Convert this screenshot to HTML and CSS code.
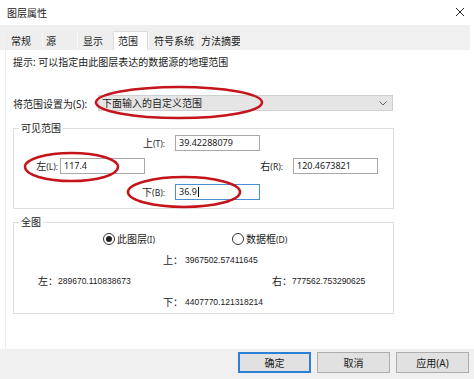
FILE: index.html
```html
<!DOCTYPE html>
<html lang="zh-CN">
<head>
<meta charset="utf-8">
<title>图层属性</title>
<link rel="stylesheet" href="styles.css">
</head>
<body>
<div class="window">
  <div class="titlebar">
    <span class="title">图层属性</span>
    <svg class="close" width="10" height="10" viewBox="0 0 10 10"><path d="M1 1 L9 9 M9 1 L1 9" stroke="#222" stroke-width="1" fill="none"/></svg>
  </div>
  <div class="tabstrip">
    <div class="tab t1">常规</div>
    <div class="tab t2">源</div>
    <div class="tab t3">显示</div>
    <div class="tab t4 active">范围</div>
    <div class="tab t5">符号系统</div>
    <div class="tab t6">方法摘要</div>
  </div>
  <div class="panel">
    <p class="hint">提示: 可以指定由此图层表达的数据源的地理范围</p>
    <div class="setrow">
      <span class="setlbl">将范围设置为(S):</span>
      <div class="combo">
        <span>下面输入的自定义范围</span>
        <svg class="chev" width="8" height="5" viewBox="0 0 8 5"><path d="M0.5 0.5 L4 4 L7.5 0.5" stroke="#666" stroke-width="1" fill="none"/></svg>
      </div>
    </div>
    <fieldset class="group g1">
      <legend>可见范围</legend>
      <div class="frow r1">
        <div class="pair mid"><span class="lbl">上<small>(T):</small></span><div class="inp">39.42288079</div></div>
      </div>
      <div class="frow r2">
        <div class="pair left"><span class="lbl">左<small>(L):</small></span><div class="inp">117.4</div></div>
        <div class="pair right"><span class="lbl">右<small>(R):</small></span><div class="inp">120.4673821</div></div>
      </div>
      <div class="frow r3">
        <div class="pair mid"><span class="lbl">下<small>(B):</small></span><div class="inp focus">36.9<span class="caret"></span></div></div>
      </div>
    </fieldset>
    <fieldset class="group g2">
      <legend>全图</legend>
      <div class="vrow radios">
        <div class="radio first"><span class="dot on"></span><span>此图层<small>(I)</small></span></div>
        <div class="radio"><span class="dot"></span><span>数据框<small>(D)</small></span></div>
      </div>
      <div class="vrow">
        <span class="vl mid">上：</span><span class="val w77">3967502.57411645</span>
      </div>
      <div class="vrow">
        <span class="vl lft">左：</span><span class="val w73">289670.110838673</span>
        <span class="vl rgt">右：</span><span class="val w70">777562.753290625</span>
      </div>
      <div class="vrow">
        <span class="vl mid">下：</span><span class="val w80">4407770.121318214</span>
      </div>
    </fieldset>
  </div>
  <div class="footer">
    <button class="btn default">确定</button>
    <button class="btn">取消</button>
    <button class="btn">应用(A)</button>
  </div>
  <svg class="marks" width="474" height="379" viewBox="0 0 474 379">
    <ellipse cx="179" cy="102.5" rx="83" ry="15.5" fill="none" stroke="#c4141c" stroke-width="2.6"/>
    <ellipse cx="71.5" cy="167" rx="46.5" ry="14" fill="none" stroke="#c4141c" stroke-width="2.6"/>
    <ellipse cx="184" cy="192" rx="56" ry="15" fill="none" stroke="#c4141c" stroke-width="2.6"/>
  </svg>
</div>
</body>
</html>
```

FILE: styles.css
```css
* { box-sizing: border-box; }
html, body { margin: 0; padding: 0; }
body {
  width: 474px;
  height: 379px;
  overflow: hidden;
  background: #fff;
  font-family: "Noto Sans", "Noto Sans CJK SC", sans-serif;
  font-size: 10px;
  color: #1a1a1a;
}
small { font-size: 8.5px; }
.window {
  position: relative;
  width: 474px;
  height: 379px;
  display: flex;
  flex-direction: column;
}
.titlebar {
  height: 25px;
  flex: none;
  display: flex;
  align-items: center;
  justify-content: space-between;
  padding: 0 9px 0 7px;
}
.title { line-height: 14px; }
.close { display: block; margin-top: -1px; }

.tabstrip {
  height: 25px;
  flex: none;
  width: 470px;
  background: #f0f0f0;
  display: flex;
  align-items: flex-end;
  padding-left: 5px;
}
.tab {
  height: 18px;
  line-height: 18px;
  padding-left: 5px;
  background: #eeeeee;
  border-left: 1px solid #f8f8f8;
  white-space: nowrap;
  overflow: hidden;
}
.tab.t1 { width: 37px; padding-left: 6px; border-left: none; }
.tab.t2 { width: 35px; padding-left: 3px; }
.tab.t3 { width: 36px; }
.tab.t4 { width: 35px; padding-left: 4px; }
.tab.t5 { width: 49px; }
.tab.t6 { width: 43px; padding-left: 3px; }
.tab.active {
  height: 19px;
  background: #fff;
  border: 1px solid #dcdcdc;
  border-bottom: none;
}

.panel {
  flex: 1;
  margin-left: 5px;
  width: 465px;
  border-left: 1px solid #ececec;
  background: #fff;
  padding-left: 7px;
  display: flex;
  flex-direction: column;
}
.hint {
  margin: 5px 0 0 0;
  line-height: 14px;
}
.setrow {
  margin-top: 26px;
  display: flex;
  align-items: center;
  height: 16px;
}
.setlbl { width: 85px; white-space: nowrap; }
.combo {
  width: 295px;
  height: 16px;
  background: #e5e5e5;
  border: 1px solid #cfcfcf;
  display: flex;
  align-items: center;
  justify-content: space-between;
  padding: 0 5px 0 3px;
  line-height: 14px;
}
.chev { display: block; }

.group {
  margin: 0;
  padding: 0;
  width: 381px;
  min-width: 0;
  border: 1px solid #dedede;
}
.group legend {
  margin-left: 5px;
  padding: 0 2px;
  line-height: 12px;
  font-size: 10px;
}
.g1 { margin-top: 11px; padding: 1px 0 8px 0; }
.g2 { margin-top: 7px; padding: 3px 0 4px 0; }

.frow { display: flex; height: 16px; }
.r2 { margin-top: 7px; }
.r3 { margin-top: 10px; }
.pair { display: flex; align-items: center; }
.lbl { width: 30px; text-align: right; white-space: nowrap; line-height: 16px; }
.inp {
  width: 85px;
  height: 16px;
  border: 1px solid #a8a8a8;
  padding-left: 3px;
  font-size: 9px;
  line-height: 14px;
  white-space: nowrap;
  display: flex;
  align-items: center;
}
.inp.focus { border-color: #4a8ed6; }
.caret { display: inline-block; width: 1px; height: 10px; background: #000; margin-left: 1px; }
.pair.mid { margin-left: 121px; }
.pair.mid .inp { margin-left: 10px; }
.pair.left { margin-left: 14px; }
.pair.left .inp { margin-left: 2px; }
.pair.right { margin-left: 108px; }
.pair.right .inp { margin-left: 10px; }

.vrow {
  display: flex;
  align-items: center;
  height: 15px;
  white-space: nowrap;
}
.vrow + .vrow { margin-top: 6px; }
.radio { display: flex; align-items: center; gap: 2px; }
.radio.first { margin-left: 89px; width: 129px; }
.dot {
  width: 12px;
  height: 12px;
  border-radius: 50%;
  border: 1px solid #333;
  background: #fff;
  display: flex;
  align-items: center;
  justify-content: center;
}
.dot.on::after {
  content: "";
  width: 6px;
  height: 6px;
  border-radius: 50%;
  background: #222;
}
.vl { width: 20px; flex: none; }
.vl.mid { margin-left: 149px; }
.vl.lft { margin-left: 24px; }
.vl.rgt { margin-left: 141px; }
.val {
  margin-left: 2px;
  font-size: 8.5px;
  font-family: "Liberation Sans", "Noto Sans", sans-serif;
  white-space: nowrap;
  flex: none;
}
.w77 { min-width: 77px; }
.w73 { min-width: 73px; margin-left: 0; }
.w70 { min-width: 70px; margin-left: 0; }
.w80 { min-width: 80px; }

.footer {
  flex: none;
  height: 30px;
  background: #f0f0f0;
  display: flex;
  justify-content: flex-end;
  align-items: flex-start;
  padding: 3px 5px 0 0;
  gap: 6px;
}
.btn {
  width: 73px;
  height: 21px;
  margin: 0;
  padding: 0;
  background: #e1e1e1;
  border: 1px solid #adadad;
  font-family: "Noto Sans", "Noto Sans CJK SC", sans-serif;
  font-size: 10px;
  color: #1a1a1a;
}
.btn.default { border: 2px solid #2b7fd4; }

.marks {
  position: absolute;
  left: 0;
  top: 0;
  pointer-events: none;
}
```
